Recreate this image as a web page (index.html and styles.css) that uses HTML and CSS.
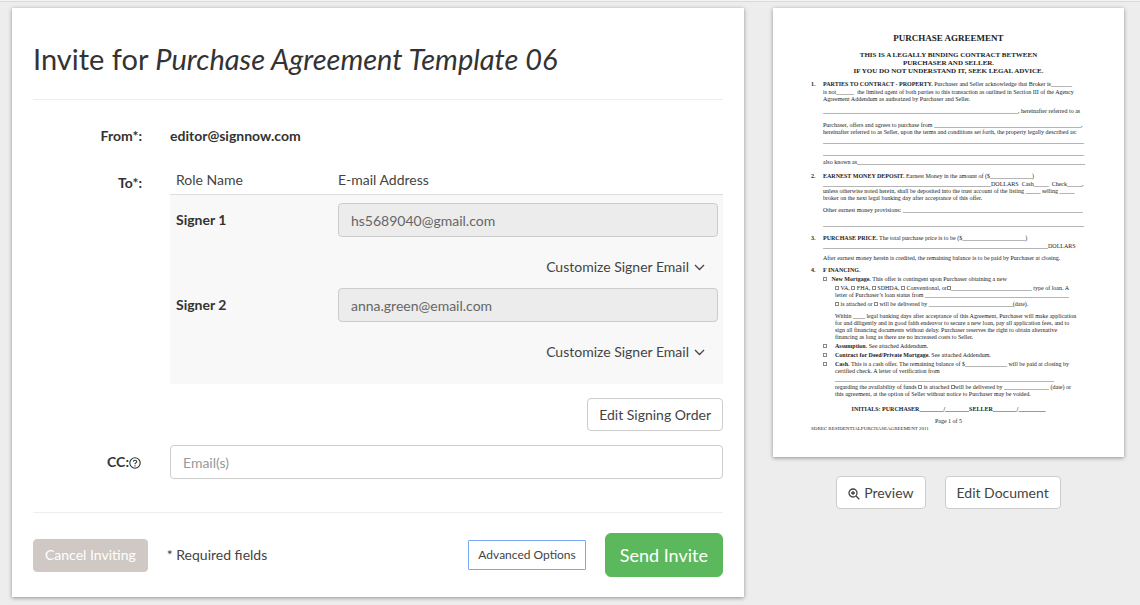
FILE: index.html
```html
<!DOCTYPE html>
<html lang="en">
<head>
  <meta charset="UTF-8" />
  <meta name="viewport" content="width=device-width, initial-scale=1.0" />
  <title>Invite for Purchase Agreement Template 06</title>
  <link rel="stylesheet" href="styles.css">
</head>
<body>
  <div class="topbar"></div>
  <main class="layout">

    <!-- Invite form -->
    <form class="card invite">
      <h1>Invite for <em>Purchase Agreement Template 06</em></h1>
      <hr />

      <div class="fields">
        <span class="label">From*:</span>
        <strong class="from">editor@signnow.com</strong>

        <span class="label to-label" id="toLabel">To*:</span>
        <table class="signers" aria-labelledby="toLabel">
          <thead>
            <tr>
              <th class="role">Role Name</th>
              <th>E-mail Address</th>
            </tr>
          </thead>
          <tbody>
            <tr>
              <td><label for="signer1">Signer 1</label></td>
              <td>
                <input type="email" id="signer1" class="input" value="hs5689040@gmail.com" readonly />
                <button type="button" class="customize">
                  Customize Signer Email
                  <svg width="11" height="7" viewBox="0 0 11 7"><path d="M1 1l4.5 4.5L10 1" /></svg>
                </button>
              </td>
            </tr>
            <tr>
              <td><label for="signer2">Signer 2</label></td>
              <td>
                <input type="email" id="signer2" class="input" value="anna.green@email.com" readonly />
                <button type="button" class="customize">
                  Customize Signer Email
                  <svg width="11" height="7" viewBox="0 0 11 7"><path d="M1 1l4.5 4.5L10 1" /></svg>
                </button>
              </td>
            </tr>
          </tbody>
        </table>

        <button type="button" class="btn order">Edit Signing Order</button>

        <label class="label cc-label" for="cc">CC:<svg width="12" height="12" viewBox="0 0 12 12"><circle cx="6" cy="6" r="5.2" /><path d="M4.4 4.8c0-2.1 3.3-2.1 3.3-.1C7.700 5.900 6 5.900 6 7.200M6 8.200v1.200" /></svg></label>
        <input type="text" id="cc" class="input" placeholder="Email(s)" />
      </div>

      <hr />
      <div class="actions">
        <button type="button" class="btn btn-cancel">Cancel Inviting</button>
        <span class="required">* Required fields</span>
        <button type="button" class="btn btn-advanced">Advanced Options</button>
        <button type="submit" class="btn btn-send">Send Invite</button>
      </div>
    </form>

    <!-- Document preview -->
    <aside class="side">
      <article class="card doc">
        <h2>PURCHASE AGREEMENT</h2>
        <h3>THIS IS A LEGALLY BINDING CONTRACT BETWEEN<br />PURCHASER AND SELLER.<br />IF YOU DO NOT UNDERSTAND IT, SEEK LEGAL ADVICE.</h3>

        <section>
          <b class="num">1.</b>
          <p><b>PARTIES TO CONTRACT - PROPERTY.</b> Purchaser and Seller acknowledge that Broker is_______</p>
          <p class="mt-1">is not______&nbsp; the limited agent of both parties to this transaction as outlined in Section III of the Agency<br />Agreement Addendum as authorized by Purchaser and Seller.</p>
          <p class="mt-5">_________________________________________________________________, hereinafter referred to as</p>
          <p class="mt-7">Purchaser, offers and agrees to purchase from _________________________________________________,<br />hereinafter referred to as Seller, upon the terms and conditions set forth, the property legally described as:</p>
          <p class="mt-2">_______________________________________________________________________________________</p>
          <p class="mt-5">_______________________________________________________________________________________</p>
          <p class="mt-2">also known as____________________________________________________________________________</p>
        </section>

        <section>
          <b class="num">2.</b>
          <p><b>EARNEST MONEY DEPOSIT.</b> Earnest Money in the amount of ($______________)</p>
          <p class="mt-1">________________________________________________________DOLLARS&nbsp; Cash_____&nbsp; Check_____,<br />unless otherwise noted herein, shall be deposited into the trust account of the listing _____ selling _____<br />broker on the next legal banking day after acceptance of this offer.</p>
          <p class="mt-5">Other earnest money provisions: ____________________________________________________________</p>
          <p class="mt-7">_______________________________________________________________________________________</p>
        </section>

        <section>
          <b class="num">3.</b>
          <p><b>PURCHASE PRICE.</b> The total purchase price is to be ($_____________________)</p>
          <p class="mt-1">___________________________________________________________________________DOLLARS</p>
          <p class="mt-5">After earnest money herein is credited, the remaining balance is to be paid by Purchaser at closing.</p>
        </section>

        <section class="mt-5">
          <b class="num">4.</b>
          <p><b>F INANCING.</b></p>
          <p class="mt-2"><i class="box"></i>&nbsp;&nbsp; <b>New Mortgage.</b> This offer is contingent upon Purchaser obtaining a new</p>
          <div class="indent">
            <p class="mt-2"><i class="box"></i> VA, <i class="box"></i> FHA, <i class="box"></i> SDHDA, <i class="box"></i> Conventional, or<i class="box"></i>___________________________ type of loan. A<br />letter of Purchaser’s loan status from ________________________________________________</p>
            <p class="mt-2"><i class="box"></i> is attached or <i class="box"></i> will be delivered by ____________________________(date).</p>
            <p class="mt-5">Within ____ legal banking days after acceptance of this Agreement, Purchaser will make application<br />for and diligently and in good faith endeavor to secure a new loan, pay all application fees, and to<br />sign all financing documents without delay. Purchaser reserves the right to obtain alternative<br />financing as long as there are no increased costs to Seller.</p>
            <p class="mt-2 check"><b>Assumption.</b> See attached Addendum.</p>
            <p class="mt-2 check"><b>Contract for Deed/Private Mortgage.</b> See attached Addendum.</p>
            <p class="mt-2 check"><b>Cash.</b> This is a cash offer. The remaining balance of $______________ will be paid at closing by<br />certified check. A letter of verification from</p>
            <p class="mt-1">_________________________________________________________________________</p>
            <p class="mt-1">regarding the availability of funds <i class="box"></i> is attached <i class="box"></i>will be delivered by _______________ (date) or<br />this agreement, at the option of Seller without notice to Purchaser may be voided.</p>
          </div>
        </section>

        <p class="initials"><b>INITIALS: PURCHASER________/________SELLER________/_________</b></p>
        <p class="page">Page 1 of 5</p>
        <p class="form-id">SDREC RESIDENTIALPURCHASEAGREEMENT 2011</p>
      </article>

      <div class="doc-actions">
        <button type="button" class="btn"><svg width="12" height="12" viewBox="0 0 12 12"><circle cx="5" cy="5" r="4" /><path d="M8 8l3.300 3.300M5 3v4M3 5h4" /></svg>Preview</button>
        <button type="button" class="btn">Edit Document</button>
      </div>
    </aside>

  </main>
</body>
</html>
```

FILE: styles.css
```css
/* ------------------ Base ------------------ */
*,
*::before {
  box-sizing: border-box;
}
body {
  margin: 0;
  background: #ededed;
  color: #444;
  font: 14px/20px Lato, sans-serif;
}
h1, h2, h3, p {
  margin: 0;
}
svg {
  fill: none;
  stroke: #444;
  stroke-width: 1.3;
}
.topbar {
  height: 2px;
  background: #f4f4f4;
  border-bottom: 1px solid #d8dada;
}
.layout {
  display: flex;
  align-items: flex-start;
  gap: 29px;
  padding: 6px 16px 8px 12px;
}
.card {
  background: #fff;
  box-shadow: 0 1px 4px rgba(0,0,0,0.4);
}

/* ------------------ Invite form ------------------ */
.invite {
  flex: 1;
  padding: 31px 21px 20px;
}
h1 {
  font-size: 29px;
  line-height: 40px;
  font-weight: 400;
  color: #333;
}
hr {
  height: 1px;
  margin: 20px 0;
  border: 0;
  background: #eee;
}
.fields {
  display: grid;
  grid-template-columns: 109px 1fr;
  column-gap: 28px;
  padding-top: 6px;
  margin-bottom: 33px;
}
.label {
  text-align: right;
  font-weight: 700;
  color: #333;
}
.from {
  color: #333;
}
.to-label {
  padding-top: 27px;
}
.signers {
  width: 100%;
  margin-top: 22px;
  border-collapse: collapse;
}
.signers th {
  padding: 2px 0 4px;
  border-bottom: 1px solid #ddd;
  font-weight: 400;
  text-align: left;
}
.signers .role {
  width: 168px;
  padding-left: 6px;
}
.signers td {
  padding: 8px 5px 3px 0;
  background: #f8f8f8;
  vertical-align: top;
}
.signers td:first-child {
  padding: 15px 0 0 6px;
  font-weight: 700;
  color: #333;
}
.signers tbody tr:last-child td {
  padding-bottom: 22px;
}
.input {
  display: block;
  width: 100%;
  height: 34px;
  padding: 0 12px;
  border: 1px solid #ccc;
  border-radius: 4px;
  background: #fff;
  font: inherit;
  color: #666;
}
.input[readonly] {
  background: #ececec;
}
.input::placeholder {
  color: #999;
}
.customize {
  display: flex;
  align-items: center;
  gap: 5px;
  height: 20px;
  margin: 20px 13px 0 auto;
  padding: 0;
  border: 0;
  background: none;
  font: inherit;
  color: #444;
}
.btn {
  height: 33px;
  padding: 0 11px;
  border: 1px solid #ccc;
  border-radius: 4px;
  background: #fff;
  font: inherit;
  color: #444;
  cursor: pointer;
}
.order {
  grid-column: 2;
  justify-self: end;
  margin: 14px 0;
}
.cc-label {
  padding: 7px 1px 0 0;
}
.cc-label svg {
  vertical-align: -2px;
  stroke-width: 1.1;
  stroke: #333;
}
.actions {
  display: flex;
  align-items: center;
}
.btn-cancel {
  border-color: #cfc8c4;
  background: #cfc8c4;
  color: #fff;
}
.required {
  margin: 0 auto 0 19px;
}
.btn-advanced {
  height: 30px;
  margin-right: 19px;
  padding: 0 9px;
  border-color: #7aa7f5;
  border-radius: 1px;
  font-size: 12px;
}
.btn-send {
  height: 44px;
  padding: 0 14px;
  border-color: #5cb85c;
  border-radius: 6px;
  background: #5cb85c;
  color: #fff;
  font-size: 18px;
}

/* ------------------ Document preview ------------------ */
.side {
  width: 351px;
}
.doc {
  padding: 25px 38px 25px;
  font: 6px/7px "Liberation Serif", serif;
  color: #222;
  white-space: nowrap;
}
.doc h2 {
  font-size: 9px;
  line-height: 11px;
  text-align: center;
}
.doc h3 {
  margin: 7px 0 6px;
  font-size: 7px;
  line-height: 8px;
  text-align: center;
}
.doc section {
  position: relative;
  padding-left: 12px;
}
.doc section + section {
  margin-top: 7px;
}
.doc .num {
  position: absolute;
  left: 0;
}
.doc .indent {
  padding-left: 12px;
}
.doc .mt-1 { margin-top: 1px; }
.doc .mt-2 { margin-top: 2px; }
.doc .mt-5,
.doc section.mt-5 { margin-top: 5px; }
.doc .mt-7 { margin-top: 7px; }
.box,
.check::before {
  display: inline-block;
  width: 4px;
  height: 4px;
  border: 1px solid #888;
}
.check::before {
  content: "";
  margin: 0 8px 0 -12px;
}
.initials {
  padding: 8px 0 5px;
  text-align: center;
}
.page {
  text-align: center;
}
.form-id {
  font-size: 5px;
}
.doc-actions {
  display: flex;
  justify-content: center;
  gap: 19px;
  margin-top: 19px;
}
.doc-actions svg {
  margin-right: 4px;
  vertical-align: -2px;
}
```
